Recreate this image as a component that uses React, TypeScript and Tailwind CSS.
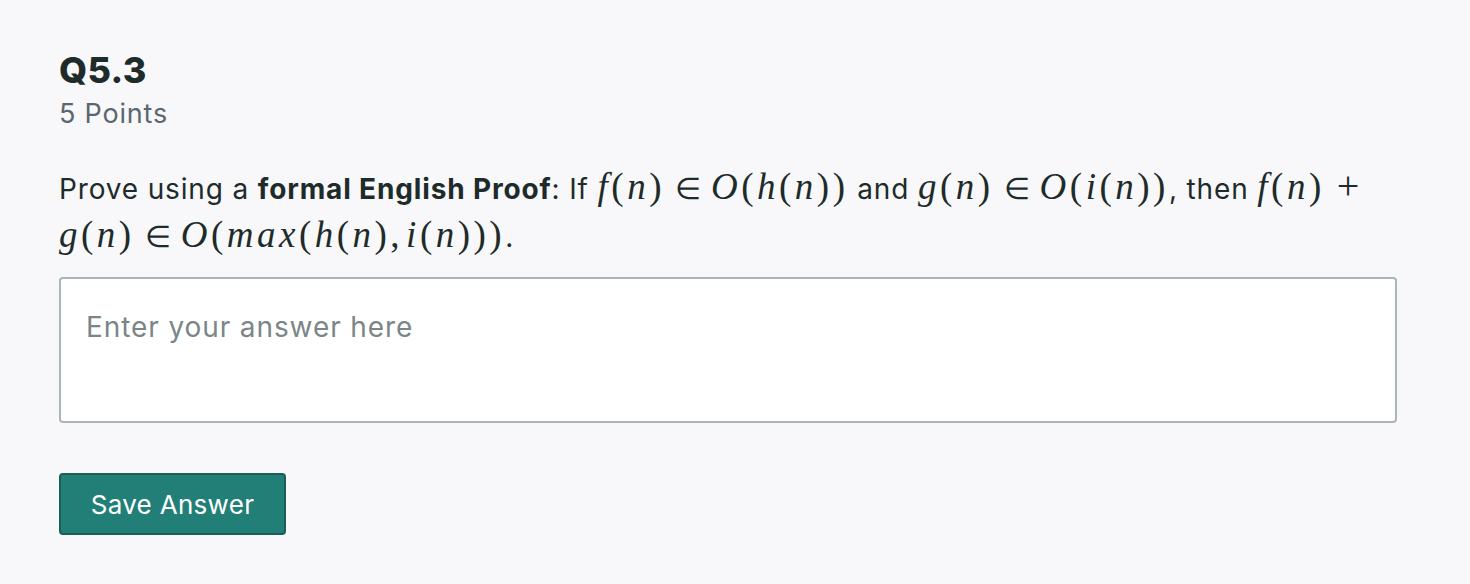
import type { ReactNode } from "react";

function M({ children }: { children: ReactNode }) {
  return (
    <span className="font-['Liberation_Serif',serif] italic text-[37px] leading-none tracking-[3.5px]">
      {children}
    </span>
  );
}

function U({ children }: { children: ReactNode }) {
  return <span className="not-italic">{children}</span>;
}

function Rel({ children }: { children: ReactNode }) {
  return <span className="not-italic mx-[10px] text-[30px] tracking-normal">{children}</span>;
}

export default function App() {
  return (
    <div className="min-h-[584px] w-full bg-[#f8f8fa] font-['Inter',sans-serif] text-[#1e2b2b]">
      <div className="px-[59px] pt-[48px]">
        <h2 className="text-[36px] font-extrabold leading-[44px] tracking-[0.3px]">Q5.3</h2>
        <div className="mt-[5px] text-[27px] leading-[34px] tracking-[0.8px] text-[#5a6770]">5 Points</div>

        <p className="mt-[34px] whitespace-nowrap text-[28px] leading-[48px] tracking-[0.85px]">
          Prove using a <b className="font-bold">formal English Proof</b>: If{" "}
          <M>
            f<U>(</U>n<U>)</U>
            <Rel>∈</Rel>O<U>(</U>h<U>(</U>n<U>))</U>
          </M>{" "}
          and{" "}
          <M>
            g<U>(</U>n<U>)</U>
            <Rel>∈</Rel>O<U>(</U>i<U>(</U>n<U>))</U>
          </M>
          , then{" "}
          <M>
            f<U>(</U>n<U>)</U>
            <span className="not-italic ml-[12px] text-[40px] tracking-normal">+</span>
          </M>
          <br />
          <M>
            g<U>(</U>n<U>)</U>
            <Rel>∈</Rel>O<U>(</U>max<U>(</U>h<U>(</U>n<U>),</U>
            <span className="ml-[3px]" />i<U>(</U>n<U>)))</U>
          </M>
          .
        </p>

        <textarea
          placeholder="Enter your answer here"
          className="mt-[16px] block h-[146px] w-[1338px] resize-none rounded-[4px] border-2 border-[#aab4bb] bg-white px-[25px] py-[31px] text-[28px] leading-[34px] tracking-[0.9px] text-[#1e2b2b] outline-none placeholder:text-[#7a8688]"
        />

        <button className="mt-[50px] flex h-[62px] w-[227px] items-center justify-center rounded-[4px] border-2 border-[#1b5e59] bg-[#217f78] text-[26px] tracking-[0.3px] text-white">
          Save Answer
        </button>
      </div>
    </div>
  );
}
